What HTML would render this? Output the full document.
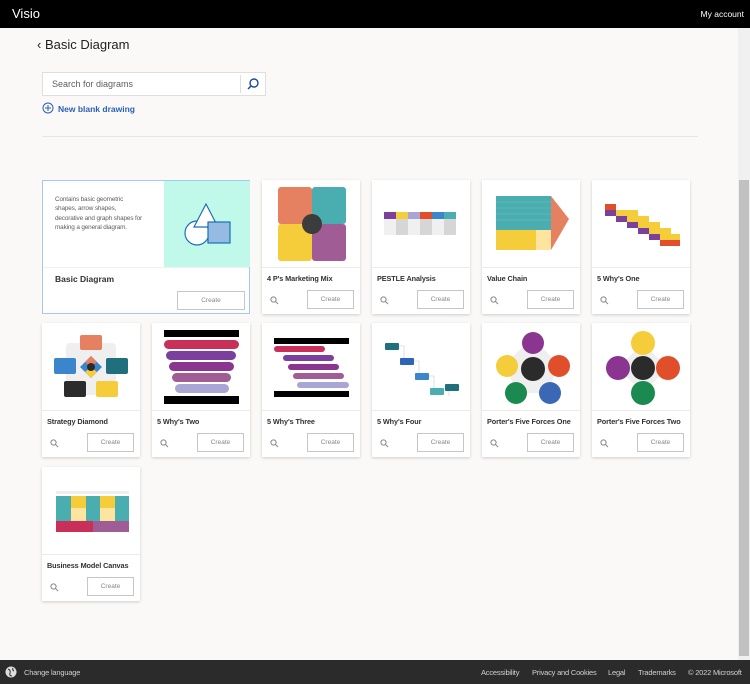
<!DOCTYPE html>
<html><head><style>
*{margin:0;padding:0;box-sizing:border-box}
body{width:750px;height:684px;background:#faf9f8;font-family:"Liberation Sans",sans-serif;position:relative;overflow:hidden;color:#323130}
.hdr{position:absolute;left:0;top:0;width:750px;height:28px;background:#000;color:#fff}
.a{position:absolute}
.card{position:absolute;width:98px;height:134px;background:#fff;box-shadow:0 1px 3px rgba(0,0,0,.18)}
.card .im{position:absolute;left:0;top:0;width:98px;height:88px;border-bottom:1px solid #edebe9}
.card .t{position:absolute;left:5px;top:94px;font-size:7.3px;font-weight:bold;color:#323130;white-space:nowrap;letter-spacing:-.1px}
.btn{position:absolute;border:1px solid #c8c6c4;background:#fff;font-size:6.5px;color:#8a8886;text-align:center}
.card .btn{left:45px;top:110px;width:47px;height:19px;line-height:17px}
.card .z{position:absolute;left:8px;top:116px}
.foot{position:absolute;left:0;top:660px;width:750px;height:24px;background:#2b2b2b;color:#d0d0d0;font-size:7.5px;letter-spacing:-.2px}
</style></head><body>
<div class="hdr"><span class="a" style="left:12px;top:6px;font-size:13px">Visio</span><span class="a" style="right:6px;top:9px;font-size:8.5px">My account</span></div>
<div class="a" style="left:738px;top:28px;width:12px;height:632px;background:#f0f0f0"></div>
<div class="a" style="left:739px;top:180px;width:10px;height:476px;background:#c1c1c1"></div>
<div class="a" style="left:37px;top:37px;font-size:13px;color:#201f1e">‹ Basic Diagram</div>
<div class="a" style="left:42px;top:72px;width:224px;height:24px;background:#fff;border:1px solid #e1dfdd"></div>
<div class="a" style="left:52px;top:79px;font-size:9px;color:#605e5c">Search for diagrams</div>
<div class="a" style="left:240px;top:75px;width:1px;height:18px;background:#e1dfdd"></div>
<svg class="a" style="left:246px;top:77px" width="14" height="14"><circle cx="8" cy="6" r="4" fill="none" stroke="#1b4a9c" stroke-width="1.4"/><line x1="5" y1="9" x2="2" y2="12" stroke="#1b4a9c" stroke-width="1.4"/></svg>
<svg class="a" style="left:42px;top:102px" width="12" height="12"><circle cx="6" cy="6" r="5" fill="none" stroke="#2b5fb5"/><path d="M6 3v6M3 6h6" stroke="#2b5fb5"/></svg>
<div class="a" style="left:58px;top:104px;font-size:8.5px;color:#2b5fb5;font-weight:bold">New blank drawing</div>
<div class="a" style="left:42px;top:136px;width:656px;height:1px;background:#e8e6e4"></div>

<div class="a" style="left:42px;top:180px;width:208px;height:134px;background:#fff;border:1px solid #a7c8ee">
 <div class="a" style="left:12px;top:14px;font-size:6.4px;line-height:9.3px;color:#605e5c;white-space:nowrap;letter-spacing:-.15px">Contains basic geometric<br>shapes, arrow shapes,<br>decorative and graph shapes for<br>making a general diagram.</div>
 <div class="a" style="left:121px;top:0;width:86px;height:86px;background:#c0f9ea"></div>
 <svg class="a" style="left:121px;top:0" width="86" height="86"><circle cx="33" cy="52" r="12" fill="#fff" stroke="#1b6fb5" stroke-width="1.2"/><path d="M42 23L54 46H30Z" fill="#fff" stroke="#1b6fb5" stroke-width="1.2"/><rect x="44" y="41" width="22" height="21" fill="#95bbe3" stroke="#1b6fb5" stroke-width="1.2"/></svg>
 <div class="a" style="left:0;top:86px;width:206px;height:1px;background:#f0f0f0"></div>
 <div class="a" style="left:12px;top:93px;font-size:8.5px;font-weight:bold;color:#323130">Basic Diagram</div>
 <div class="btn" style="left:134px;top:110px;width:68px;height:19px;line-height:17px">Create</div>
</div>

<!-- row1 -->
<div class="card" style="left:262px;top:180px"><svg class="im" width="98" height="88"><rect x="16" y="7" width="34" height="37" rx="3" fill="#e58160"/><rect x="50" y="7" width="34" height="37" rx="3" fill="#4aaeb0"/><rect x="16" y="44" width="34" height="37" rx="3" fill="#f5cd3b"/><rect x="50" y="44" width="34" height="37" rx="3" fill="#a05d95"/><circle cx="50" cy="44" r="10" fill="#3c3c3c"/></svg><div class="t">4 P's Marketing Mix</div><svg class="z" width="9" height="9"><circle cx="3.5" cy="3.5" r="2.6" fill="none" stroke="#888"/><line x1="5.5" y1="5.5" x2="8" y2="8" stroke="#888"/></svg><div class="btn">Create</div></div>
<div class="card" style="left:372px;top:180px"><svg class="im" width="98" height="88"><rect x="12" y="32" width="12" height="7" fill="#7b3f9e"/><rect x="24" y="32" width="12" height="7" fill="#f5cd3b"/><rect x="36" y="32" width="12" height="7" fill="#a9a6d6"/><rect x="48" y="32" width="12" height="7" fill="#e04e2a"/><rect x="60" y="32" width="12" height="7" fill="#3a85cc"/><rect x="72" y="32" width="12" height="7" fill="#4aaeb0"/><rect x="12" y="39" width="12" height="16" fill="#f0f0f0"/><rect x="24" y="39" width="12" height="16" fill="#d6d6d6"/><rect x="36" y="39" width="12" height="16" fill="#f0f0f0"/><rect x="48" y="39" width="12" height="16" fill="#d6d6d6"/><rect x="60" y="39" width="12" height="16" fill="#f0f0f0"/><rect x="72" y="39" width="12" height="16" fill="#d6d6d6"/></svg><div class="t">PESTLE Analysis</div><svg class="z" width="9" height="9"><circle cx="3.5" cy="3.5" r="2.6" fill="none" stroke="#888"/><line x1="5.5" y1="5.5" x2="8" y2="8" stroke="#888"/></svg><div class="btn">Create</div></div>
<div class="card" style="left:482px;top:180px"><svg class="im" width="98" height="88"><rect x="14" y="16" width="55" height="34" fill="#4aaeb0"/><path d="M14 22h55M14 28h55M14 34h55M14 40h55" stroke="#6cc0c2" stroke-width=".6"/><rect x="14" y="50" width="40" height="20" fill="#f5cd3b"/><rect x="54" y="50" width="15" height="20" fill="#fde5a0"/><path d="M69 16L87 39L69 70Z" fill="#e58160"/></svg><div class="t">Value Chain</div><svg class="z" width="9" height="9"><circle cx="3.5" cy="3.5" r="2.6" fill="none" stroke="#888"/><line x1="5.5" y1="5.5" x2="8" y2="8" stroke="#888"/></svg><div class="btn">Create</div></div>
<div class="card" style="left:592px;top:180px"><svg class="im" width="98" height="88"><rect x="13" y="24" width="11" height="6" fill="#e04e2a"/><rect x="13" y="30" width="11" height="6" fill="#7b3f9e"/><rect x="24" y="30" width="22" height="6" fill="#f5cd3b"/><rect x="24" y="36" width="11" height="6" fill="#7b3f9e"/><rect x="35" y="36" width="22" height="6" fill="#f5cd3b"/><rect x="35" y="42" width="11" height="6" fill="#7b3f9e"/><rect x="46" y="42" width="22" height="6" fill="#f5cd3b"/><rect x="46" y="48" width="11" height="6" fill="#7b3f9e"/><rect x="57" y="48" width="22" height="6" fill="#f5cd3b"/><rect x="57" y="54" width="11" height="6" fill="#7b3f9e"/><rect x="68" y="54" width="20" height="6" fill="#f5cd3b"/><rect x="68" y="60" width="20" height="6" fill="#e04e2a"/></svg><div class="t">5 Why's One</div><svg class="z" width="9" height="9"><circle cx="3.5" cy="3.5" r="2.6" fill="none" stroke="#888"/><line x1="5.5" y1="5.5" x2="8" y2="8" stroke="#888"/></svg><div class="btn">Create</div></div>

<!-- row2 -->
<div class="card" style="left:42px;top:323px"><svg class="im" width="98" height="88"><rect x="24" y="20" width="50" height="52" rx="4" fill="#efefef"/><rect x="38" y="12" width="22" height="15" rx="2" fill="#e58160"/><rect x="12" y="35" width="22" height="16" rx="2" fill="#3a85cc"/><rect x="64" y="35" width="22" height="16" rx="2" fill="#1f6f7c"/><rect x="22" y="58" width="22" height="16" rx="2" fill="#2b2b2b"/><rect x="54" y="58" width="22" height="16" rx="2" fill="#f5cd3b"/><path d="M49 33L60 44L49 55L38 44Z" fill="#3a85cc"/><path d="M49 33L55 39L49 44L43 39Z" fill="#e58160"/><path d="M49 44L55 49L49 55L43 49Z" fill="#f5cd3b"/><circle cx="49" cy="44" r="4" fill="#2b2b2b"/></svg><div class="t">Strategy Diamond</div><svg class="z" width="9" height="9"><circle cx="3.5" cy="3.5" r="2.6" fill="none" stroke="#888"/><line x1="5.5" y1="5.5" x2="8" y2="8" stroke="#888"/></svg><div class="btn">Create</div></div>
<div class="card" style="left:152px;top:323px"><svg class="im" width="98" height="88"><rect x="12" y="7" width="75" height="7" fill="#000"/><rect x="12" y="17" width="75" height="9" rx="4.5" fill="#c8305a"/><rect x="14" y="28" width="70" height="9" rx="4.5" fill="#7b3f9e"/><rect x="17" y="39" width="65" height="9" rx="4.5" fill="#8a3590"/><rect x="20" y="50" width="59" height="9" rx="4.5" fill="#a05d95"/><rect x="23" y="61" width="54" height="9" rx="4.5" fill="#a9a6d6"/><rect x="12" y="73" width="75" height="8" fill="#000"/></svg><div class="t">5 Why's Two</div><svg class="z" width="9" height="9"><circle cx="3.5" cy="3.5" r="2.6" fill="none" stroke="#888"/><line x1="5.5" y1="5.5" x2="8" y2="8" stroke="#888"/></svg><div class="btn">Create</div></div>
<div class="card" style="left:262px;top:323px"><svg class="im" width="98" height="88"><rect x="12" y="15" width="75" height="6" fill="#000"/><rect x="12" y="23" width="51" height="6" rx="3" fill="#c8305a"/><rect x="21" y="32" width="51" height="6" rx="3" fill="#7b3f9e"/><rect x="26" y="41" width="51" height="6" rx="3" fill="#8a3590"/><rect x="31" y="50" width="51" height="6" rx="3" fill="#a05d95"/><rect x="35" y="59" width="52" height="6" rx="3" fill="#a9a6d6"/><rect x="12" y="68" width="75" height="6" fill="#000"/></svg><div class="t">5 Why's Three</div><svg class="z" width="9" height="9"><circle cx="3.5" cy="3.5" r="2.6" fill="none" stroke="#888"/><line x1="5.5" y1="5.5" x2="8" y2="8" stroke="#888"/></svg><div class="btn">Create</div></div>
<div class="card" style="left:372px;top:323px"><svg class="im" width="98" height="88"><path d="M27 23h5v12M42 38h5v12M57 53h5v12M72 68h5v5" stroke="#bcd" fill="none" stroke-width=".6"/><rect x="13" y="20" width="14" height="7" rx="1" fill="#1f6f7c"/><rect x="28" y="35" width="14" height="7" rx="1" fill="#2e64b5"/><rect x="43" y="50" width="14" height="7" rx="1" fill="#3a85cc"/><rect x="58" y="65" width="14" height="7" rx="1" fill="#4aaeb0"/><rect x="73" y="61" width="14" height="7" rx="1" fill="#1f6f7c"/></svg><div class="t">5 Why's Four</div><svg class="z" width="9" height="9"><circle cx="3.5" cy="3.5" r="2.6" fill="none" stroke="#888"/><line x1="5.5" y1="5.5" x2="8" y2="8" stroke="#888"/></svg><div class="btn">Create</div></div>
<div class="card" style="left:482px;top:323px"><svg class="im" width="98" height="88"><path d="M50 15L78 42L64 70H36L22 42Z" fill="#efefef"/><circle cx="51" cy="20" r="11" fill="#8a3590"/><circle cx="25" cy="43" r="11" fill="#f5cd3b"/><circle cx="77" cy="43" r="11" fill="#e04e2a"/><circle cx="34" cy="70" r="11" fill="#1a8a50"/><circle cx="68" cy="70" r="11" fill="#3a68b5"/><circle cx="51" cy="46" r="12" fill="#2b2b2b"/></svg><div class="t">Porter's Five Forces One</div><svg class="z" width="9" height="9"><circle cx="3.5" cy="3.5" r="2.6" fill="none" stroke="#888"/><line x1="5.5" y1="5.5" x2="8" y2="8" stroke="#888"/></svg><div class="btn">Create</div></div>
<div class="card" style="left:592px;top:323px"><svg class="im" width="98" height="88"><path d="M51 20L76 45L51 70L26 45Z" fill="#efefef"/><circle cx="51" cy="20" r="12" fill="#f5cd3b"/><circle cx="26" cy="45" r="12" fill="#8a3590"/><circle cx="76" cy="45" r="12" fill="#e04e2a"/><circle cx="51" cy="70" r="12" fill="#1a8a50"/><circle cx="51" cy="45" r="12" fill="#2b2b2b"/></svg><div class="t">Porter's Five Forces Two</div><svg class="z" width="9" height="9"><circle cx="3.5" cy="3.5" r="2.6" fill="none" stroke="#888"/><line x1="5.5" y1="5.5" x2="8" y2="8" stroke="#888"/></svg><div class="btn">Create</div></div>

<!-- row3 -->
<div class="card" style="left:42px;top:467px"><svg class="im" width="98" height="88"><rect x="14" y="24" width="73" height="3" fill="#eee"/><rect x="14" y="29" width="15" height="25" fill="#4aaeb0"/><rect x="29" y="29" width="15" height="12" fill="#f5cd3b"/><rect x="29" y="41" width="15" height="13" fill="#fde5a0"/><rect x="44" y="29" width="14" height="25" fill="#4aaeb0"/><rect x="58" y="29" width="15" height="12" fill="#f5cd3b"/><rect x="58" y="41" width="15" height="13" fill="#fde5a0"/><rect x="73" y="29" width="14" height="25" fill="#4aaeb0"/><rect x="14" y="54" width="37" height="11" fill="#c8305a"/><rect x="51" y="54" width="36" height="11" fill="#a05d95"/></svg><div class="t">Business Model Canvas</div><svg class="z" width="9" height="9"><circle cx="3.5" cy="3.5" r="2.6" fill="none" stroke="#888"/><line x1="5.5" y1="5.5" x2="8" y2="8" stroke="#888"/></svg><div class="btn">Create</div></div>

<div class="foot">
<svg class="a" style="left:5px;top:6px" width="12" height="12"><circle cx="6" cy="6" r="5.5" fill="#ddd"/><path d="M3 3q3 1 2 4t2 3M8 2q-1 2 1 3" stroke="#2b2b2b" fill="none"/></svg>
<span class="a" style="left:24px;top:8px">Change language</span>
<span class="a" style="left:481px;top:8px">Accessibility</span>
<span class="a" style="left:532px;top:8px">Privacy and Cookies</span>
<span class="a" style="left:608px;top:8px">Legal</span>
<span class="a" style="left:638px;top:8px">Trademarks</span>
<span class="a" style="left:688px;top:8px">© 2022 Microsoft</span>
</div>
</body></html>
